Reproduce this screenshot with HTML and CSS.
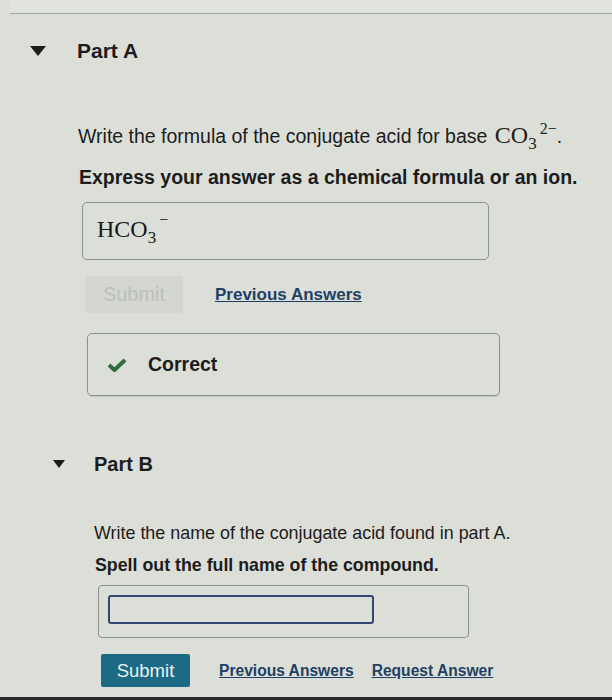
FILE: index.html
```html
<!DOCTYPE html>
<html>
<head>
<meta charset="utf-8">
<link rel="stylesheet" href="styles.css">
</head>
<body>
<div class="topbar"></div>
<section class="part part-a">
  <div class="part-head">
    <span class="tri"></span>
    <span class="part-title">Part A</span>
  </div>
  <div class="part-body">
    <p class="q">Write the formula of the conjugate acid for base <span class="chem">CO<sub>3</sub><sup>2&minus;</sup></span>.</p>
    <p class="instr">Express your answer as a chemical formula or an ion.</p>
    <div class="answer-box"><span class="chem ans">HCO<sub>3</sub><sup>&minus;</sup></span></div>
    <div class="actions">
      <button class="btn btn-disabled">Submit</button>
      <a class="link" href="#">Previous Answers</a>
    </div>
    <div class="feedback">
      <svg class="check" viewBox="0 0 20 14" width="20" height="14"><path d="M2 7 L7.5 12 L18 2" fill="none" stroke="#2f6d3b" stroke-width="4"/></svg>
      <span class="fb-text">Correct</span>
    </div>
  </div>
</section>
<section class="part part-b">
  <div class="part-head">
    <span class="tri tri-sm"></span>
    <span class="part-title sm">Part B</span>
  </div>
  <div class="part-body">
    <p class="q sm">Write the name of the conjugate acid found in part A.</p>
    <p class="instr sm">Spell out the full name of the compound.</p>
    <div class="outer-box"><div class="inner-input"></div></div>
    <div class="actions">
      <button class="btn btn-primary">Submit</button>
      <a class="link sm" href="#">Previous Answers</a>
      <a class="link sm" href="#">Request Answer</a>
    </div>
  </div>
</section>
<div class="bottom-line"></div>
</body>
</html>
```
FILE: styles.css
```css
html, body {
  margin: 0;
  padding: 0;
}
body {
  width: 612px;
  height: 700px;
  overflow: hidden;
  background: #dcdfd8;
  font-family: "Liberation Sans", Arial, sans-serif;
  color: #1c1c1c;
  position: relative;
}
.topbar {
  height: 13px;
  margin-left: 10px;
  border-bottom: 1px solid #a3a7a1;
  background: #e1e4de;
}
.part-head {
  display: flex;
  align-items: center;
  height: 26px;
}
.part-a .part-head {
  padding: 24px 0 0 30px;
}
.tri {
  width: 0;
  height: 0;
  border-left: 8px solid transparent;
  border-right: 8px solid transparent;
  border-top: 10px solid #1c1c1c;
}
.tri-sm {
  border-left-width: 6px;
  border-right-width: 6px;
  border-top-width: 8px;
}
.part-title {
  font-weight: bold;
  font-size: 21px;
  margin-left: 31px;
  line-height: 26px;
}
.part-title.sm {
  font-size: 20px;
  margin-left: 29px;
}
.part-a .part-body {
  padding: 59px 0 0 78px;
}
p {
  margin: 0;
}
.q {
  font-size: 19.5px;
  line-height: 26px;
}
.chem {
  font-family: "Liberation Serif", "Times New Roman", serif;
  font-size: 24px;
  line-height: 1;
  margin-left: 2px;
}
.chem sub {
  font-size: 17px;
  line-height: 0;
  vertical-align: -6px;
}
.chem sup {
  font-size: 16px;
  line-height: 0;
  vertical-align: 9px;
  margin-left: 3px;
}
.instr {
  margin-top: 17px;
  margin-left: 1px;
  font-weight: bold;
  font-size: 19.5px;
  line-height: 22px;
}
.answer-box {
  margin: 14px 0 0 4px;
  width: 407px;
  height: 58px;
  box-sizing: border-box;
  border: 1px solid #8d918b;
  border-radius: 5px;
  display: flex;
  align-items: center;
  padding-left: 14px;
}
.ans {
  font-size: 24px;
  color: #1a1a1a;
  margin-top: -4px;
  margin-left: 0;
}
.ans sup {
  margin-left: 3px;
  vertical-align: 12px;
}
.actions {
  display: flex;
  align-items: center;
}
.part-a .actions {
  margin: 16px 0 0 7px;
}
.btn {
  font-family: "Liberation Sans", Arial, sans-serif;
  border: none;
  border-radius: 2px;
  padding: 0;
}
.btn-disabled {
  width: 98px;
  height: 37px;
  background: #d3d7cf;
  color: #bcc0b9;
  font-size: 20px;
}
.link {
  color: #1f3f66;
  font-weight: bold;
  font-size: 17px;
  text-decoration: underline;
  margin-left: 32px;
}
.feedback {
  margin: 20px 0 0 9px;
  width: 413px;
  height: 63px;
  box-sizing: border-box;
  border: 1px solid #8d918b;
  border-radius: 5px;
  display: flex;
  align-items: center;
  box-shadow: 0 1px 1px rgba(0,0,0,0.12);
}
.check {
  margin-left: 19px;
}
.fb-text {
  font-weight: bold;
  font-size: 19.5px;
  margin-left: 21px;
}
.part-b .part-head {
  padding: 55px 0 0 53px;
}
.part-b .part-body {
  padding: 45px 0 0 94px;
}
.q.sm {
  font-size: 17.9px;
  line-height: 22px;
}
.instr.sm {
  font-size: 17.8px;
  margin-top: 10px;
  margin-left: 1px;
}
.outer-box {
  margin: 9px 0 0 4px;
  width: 371px;
  height: 53px;
  box-sizing: border-box;
  border: 1px solid #8d918b;
  border-radius: 4px;
  padding: 9px;
}
.inner-input {
  width: 266px;
  height: 29px;
  box-sizing: border-box;
  border: 2px solid #33466e;
  border-radius: 3px;
}
.part-b .actions {
  margin: 16px 0 0 7px;
}
.btn-primary {
  width: 89px;
  height: 33px;
  background: #1c6a84;
  color: #eef3f3;
  font-size: 18.5px;
}
.link.sm {
  font-size: 15.6px;
  margin-left: 29px;
}
.link.sm + .link.sm {
  margin-left: 18px;
}
.bottom-line {
  position: absolute;
  left: 0;
  right: 0;
  bottom: 0;
  height: 3px;
  background: #2a2a2a;
}
```
